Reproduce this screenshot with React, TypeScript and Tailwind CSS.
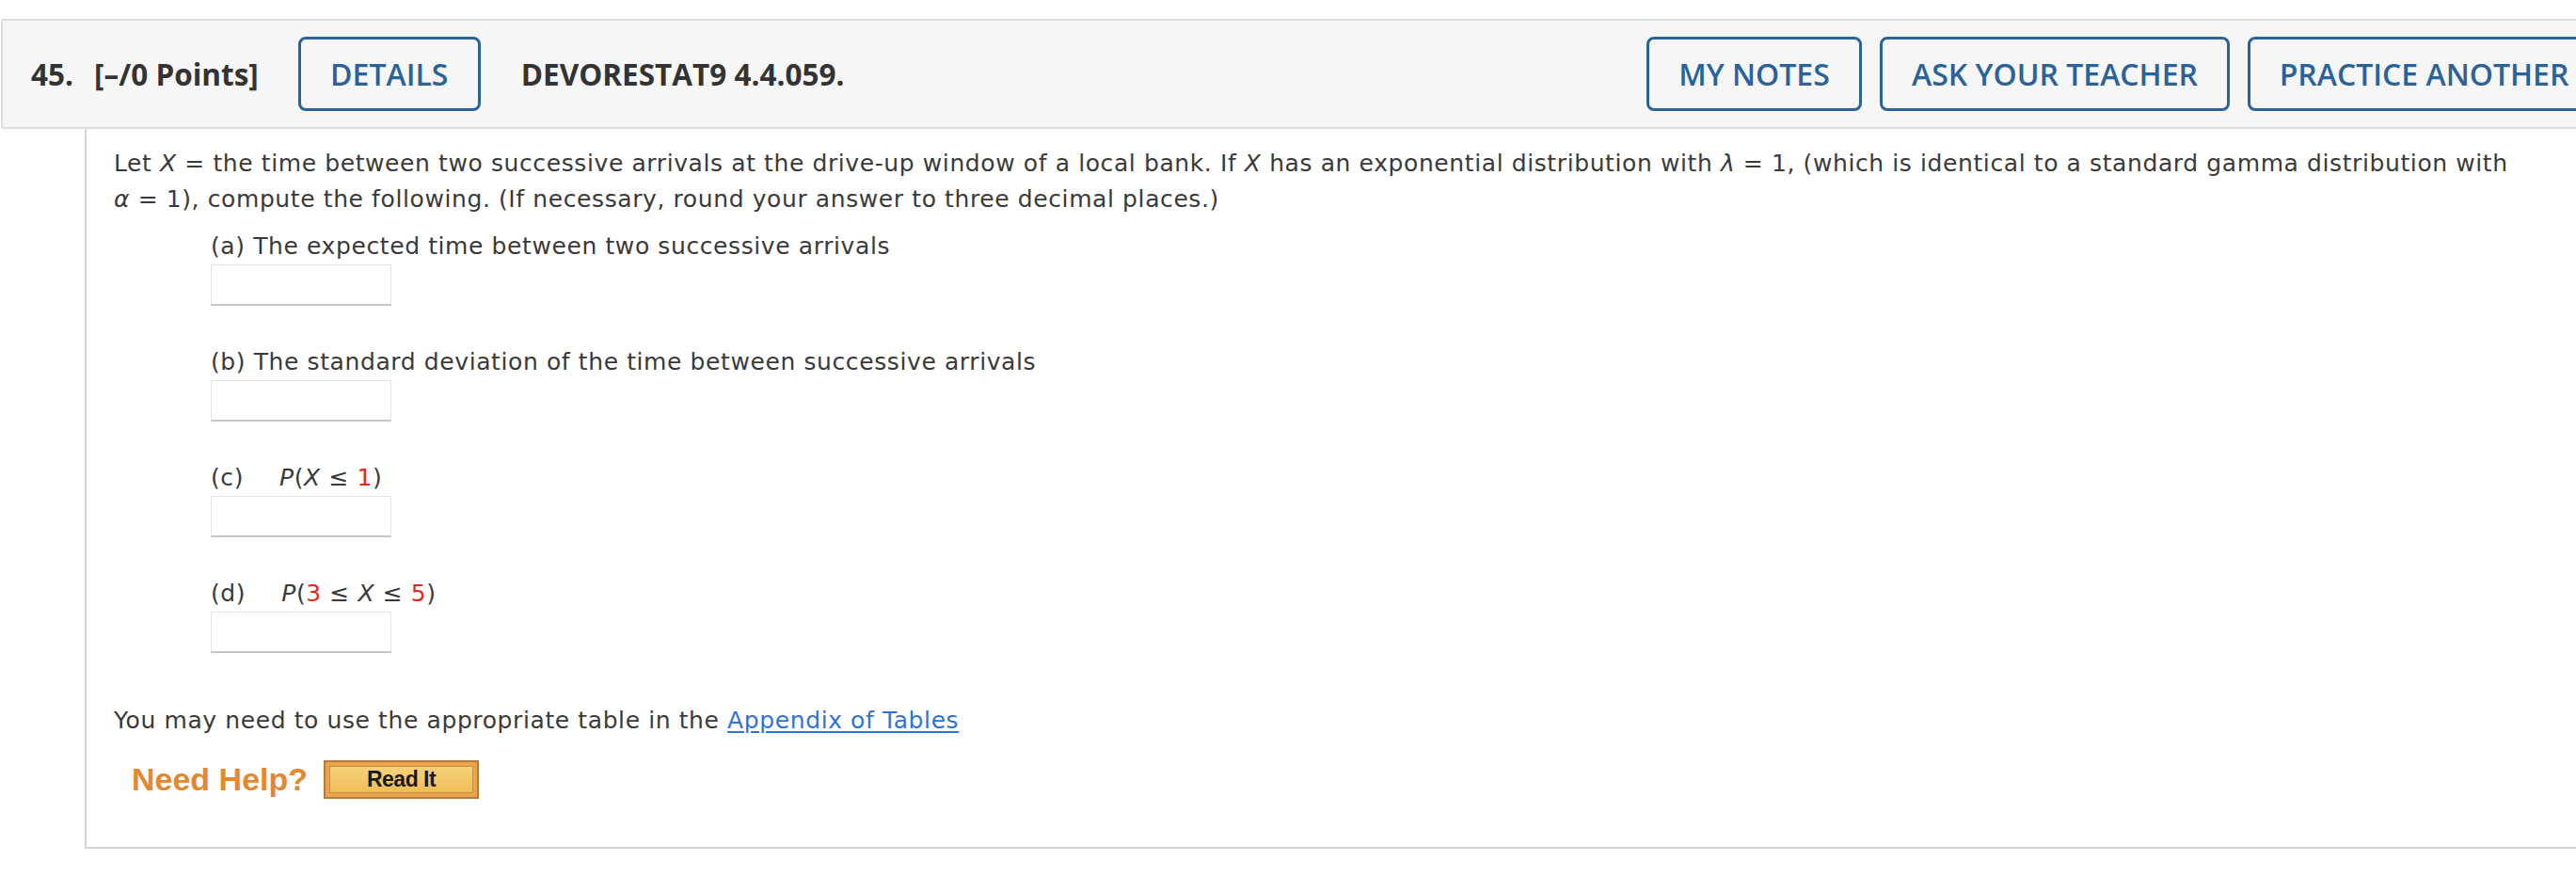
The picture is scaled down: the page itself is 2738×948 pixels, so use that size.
import React from "react";

const body = "font-['Verdana','DejaVu_Sans',sans-serif]";
const head = "font-['Open_Sans','Liberation_Sans',sans-serif]";

const Btn: React.FC<{ label: string; w: string }> = ({ label, w }) => (
  <button
    className={`${w} h-[79px] shrink-0 border-[3px] border-[#2b6297] rounded-[8px] text-[#2b6297] text-[32px] font-semibold flex items-center justify-center`}
  >
    {label}
  </button>
);

const AnswerBox = () => (
  <div className="w-[192px] h-[44px] bg-white border border-[#e4e4e4] border-b-2 border-b-[#c6c6c6]" />
);

const Part: React.FC<{ label: React.ReactNode }> = ({ label }) => (
  <div className="pl-[103px] mb-[41px]">
    <div className="leading-[38px] h-[38px] whitespace-nowrap">{label}</div>
    <AnswerBox />
  </div>
);

const Red: React.FC<{ children: React.ReactNode }> = ({ children }) => (
  <span className="text-[#e3261c]">{children}</span>
);

export default function App() {
  return (
    <div className="w-full h-[948px] overflow-hidden bg-white">
      {/* question header bar */}
      <div
        className={`${head} mt-[20px] ml-px w-[2790px] h-[117px] border-2 border-[#dddddd] rounded-[3px] bg-[#f6f6f6] flex items-center pl-[30px] pr-[25px] text-[#333333]`}
      >
        <span className="text-[31.5px] font-bold">45.</span>
        <span className="text-[31.5px] font-bold ml-[22px]">[–/0 Points]</span>
        <div className="ml-[42px]">
          <Btn label="DETAILS" w="w-[194px]" />
        </div>
        <span className="text-[31.5px] font-bold ml-[43px]">DEVORESTAT9 4.4.059.</span>
        <div className="ml-auto flex gap-[19px]">
          <Btn label="MY NOTES" w="w-[229px]" />
          <Btn label="ASK YOUR TEACHER" w="w-[372px]" />
          <Btn label="PRACTICE ANOTHER" w="w-[375px]" />
        </div>
      </div>

      {/* question body */}
      <div
        className={`${body} ml-[90px] w-[2700px] border-l-2 border-b-2 border-[#d6d6d6] pt-[18px] pl-[29px] pb-[46px] text-[25px] tracking-[0.6px] text-[#3a3a3a]`}
      >
        <p className="leading-[38px] whitespace-nowrap mb-[12px]">
          Let <i>X</i> = the time between two successive arrivals at the drive-up window of a local bank. If{" "}
          <i>X</i> has an exponential distribution with <i>λ</i> = 1, (which is identical to a standard gamma
          distribution with
          <br />
          <i>α</i> = 1), compute the following. (If necessary, round your answer to three decimal places.)
        </p>

        <Part label="(a) The expected time between two successive arrivals" />
        <Part label="(b) The standard deviation of the time between successive arrivals" />
        <Part
          label={
            <>
              (c)<span className="ml-[38px] italic">P</span>(<i>X</i> ≤ <Red>1</Red>)
            </>
          }
        />
        <Part
          label={
            <>
              (d)<span className="ml-[38px] italic">P</span>(<Red>3</Red> ≤ <i>X</i> ≤ <Red>5</Red>)
            </>
          }
        />

        <p className="leading-[38px] mt-[53px] whitespace-nowrap">
          You may need to use the appropriate table in the{" "}
          <a className="text-[#2f73d6] underline underline-offset-[3px]">Appendix of Tables</a>
        </p>

        <div className="flex items-center mt-[18px] pl-[19px] tracking-normal font-['Liberation_Sans',Arial,sans-serif]">
          <span className="text-[34px] font-bold text-[#e2892f]">Need Help?</span>
          <button className="ml-[17px] w-[165px] h-[41px] bg-[#eca44c] border-2 border-[#b27a3b] p-[4px]">
            <div className="w-full h-full bg-gradient-to-b from-[#f6d27a] to-[#f0bd55] border border-[#c58f45] flex items-center justify-center text-[23px] font-bold text-[#1a1a1a] tracking-[-0.5px]">
              Read It
            </div>
          </button>
        </div>
      </div>
    </div>
  );
}
